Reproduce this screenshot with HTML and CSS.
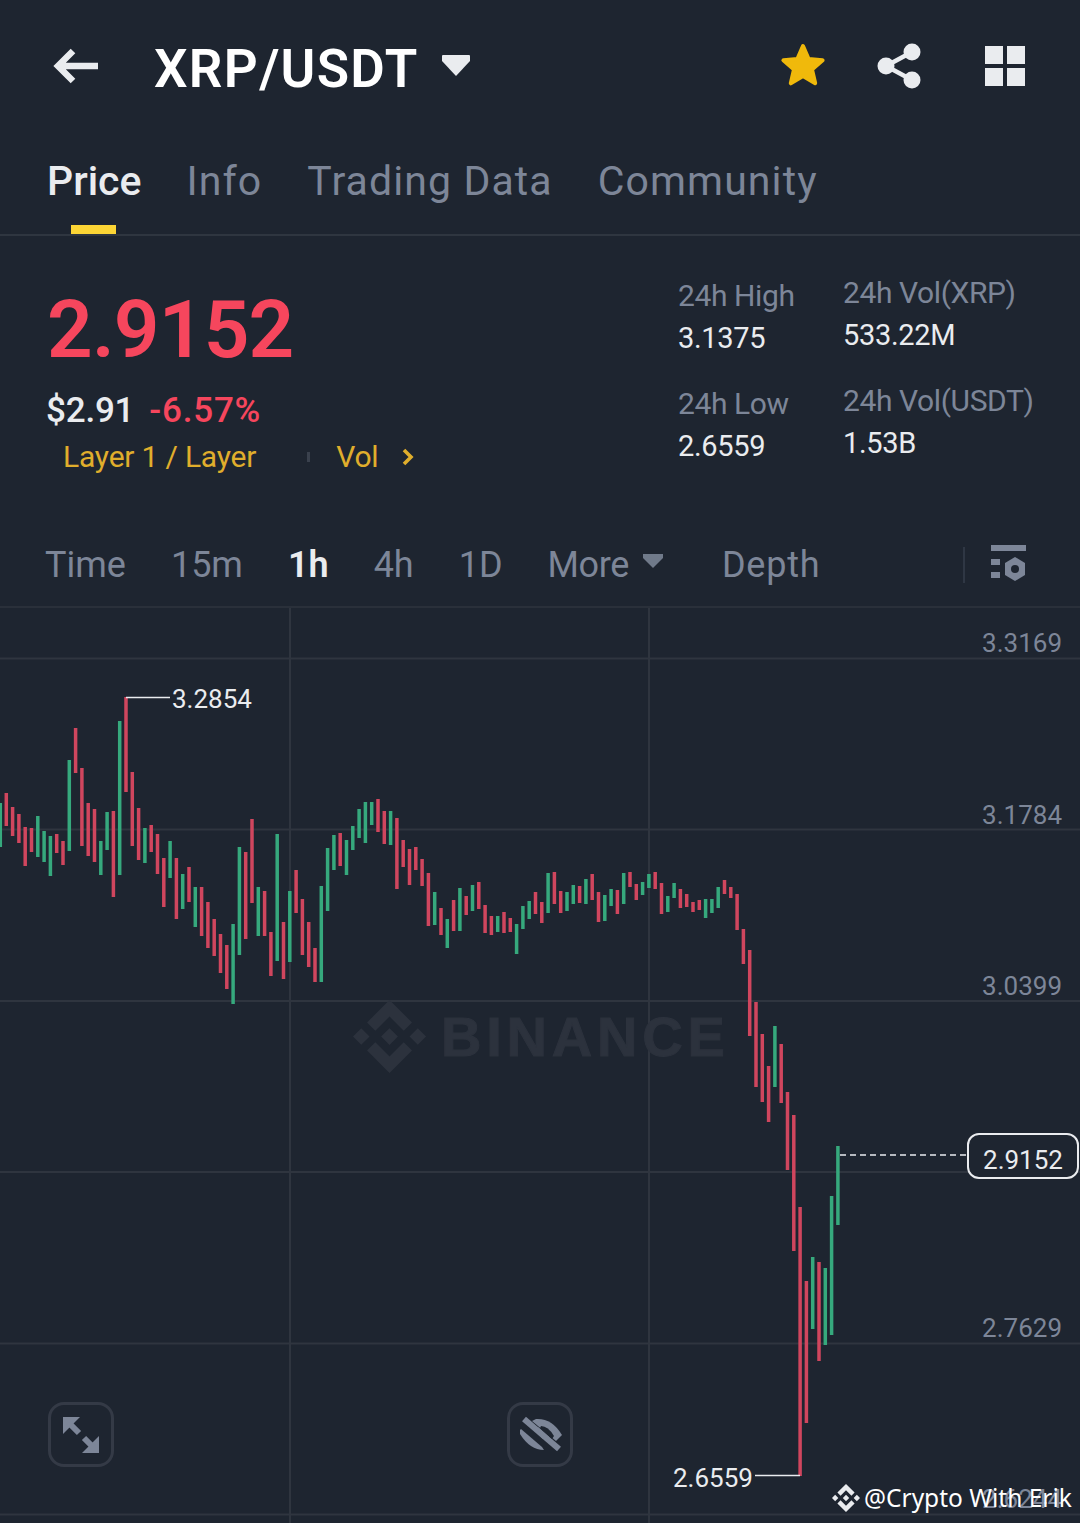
FILE: index.html
```html
<!DOCTYPE html>
<html lang="en">
<head>
  <meta charset="UTF-8" />
  <meta name="viewport" content="width=device-width, initial-scale=1.0"/>
  <title>XRP/USDT</title>
  <link rel="stylesheet" href="styles.css">
</head>
<body>

  <header class="topbar">
    <svg class="back-icon" width="46" height="38" viewBox="0 0 46 38">
      <path d="M46 19H6M21 4L6 19L21 34" fill="none" stroke="#eaecef" stroke-width="6.5"/>
    </svg>
    <h1 class="pair">XRP/USDT</h1>
    <svg class="pair-caret" width="28" height="21" viewBox="0 0 28 21">
      <path d="M1 0H27Q28 0 28 1V6L14 21L0 6V1Q0 0 1 0Z" fill="#eaecef"/>
    </svg>
    <div class="top-actions">
      <svg class="star-icon" width="48" height="48" viewBox="0 0 48 48">
        <path d="M24 4L29.6 17L43.6 18.3L33 27.5L36.2 41.3L24 34L11.8 41.3L15 27.5L4.4 18.3L18.4 17Z" fill="#f0b90b" stroke="#f0b90b" stroke-width="4" stroke-linejoin="round"/>
      </svg>
      <svg class="share-icon" width="44" height="46" viewBox="0 0 44 46">
        <path d="M35 9L9 23L35 37" fill="none" stroke="#eaecef" stroke-width="4.5"/>
        <circle cx="35" cy="9" r="8.5" fill="#eaecef"/>
        <circle cx="9" cy="23" r="8.5" fill="#eaecef"/>
        <circle cx="35" cy="37" r="8.5" fill="#eaecef"/>
      </svg>
      <svg width="40" height="40" viewBox="0 0 40 40">
        <path d="M0 0H18V18H0ZM22 0H40V18H22ZM0 22H18V40H0ZM22 22H40V40H22Z" fill="#eaecef"/>
      </svg>
    </div>
  </header>

  <nav class="tabs">
    <a class="tab active">Price</a>
    <a class="tab">Info</a>
    <a class="tab">Trading Data</a>
    <a class="tab">Community</a>
  </nav>

  <section class="summary">
    <div class="quote">
      <div class="last-price">2.9152</div>
      <div class="quote-sub">
        <span class="fiat">$2.91</span>
        <span class="change">-6.57%</span>
      </div>
      <div class="tags">
        <span>Layer 1 / Layer</span>
        <i class="tag-sep"></i>
        <span>Vol</span>
        <svg class="tag-arrow" width="12" height="18" viewBox="0 0 12 18">
          <path d="M2 2L9 9L2 16" fill="none" stroke="#e0ae2c" stroke-width="3.6"/>
        </svg>
      </div>
    </div>
    <div class="stats">
      <div class="stat-col">
        <div class="stat-label">24h High</div>
        <div class="stat-value">3.1375</div>
        <div class="stat-label gap">24h Low</div>
        <div class="stat-value">2.6559</div>
      </div>
      <div class="stat-col second">
        <div class="stat-label">24h Vol(XRP)</div>
        <div class="stat-value">533.22M</div>
        <div class="stat-label gap">24h Vol(USDT)</div>
        <div class="stat-value">1.53B</div>
      </div>
    </div>
  </section>

  <div class="intervals">
    <span>Time</span>
    <span>15m</span>
    <span class="current">1h</span>
    <span>4h</span>
    <span>1D</span>
    <span class="more">More
      <svg width="20" height="14" viewBox="0 0 20 14"><path d="M0 0H20V4L10 14L0 4Z" fill="#707a8a"/></svg>
    </span>
    <span class="depth">Depth</span>
    <i class="interval-sep"></i>
    <svg class="chart-settings" width="36" height="36" viewBox="0 0 36 36">
      <path d="M1 0H36V6H1ZM1 14H10V20H1ZM1 27H10V33H1Z" fill="#7d8698"/>
      <path d="M25 12L35 18V30L25 36L15 30V18Z" fill="#7d8698"/>
      <circle cx="25" cy="24" r="4" fill="#1e2530"/>
    </svg>
  </div>

  <main class="chart">
    <svg class="plot" width="1080" height="915" viewBox="0 608 1080 915">
      <path class="grid" d="M0 658.5H1080M0 829.5H1080M0 1001H1080M0 1172H1080M0 1343.5H1080M0 1514.5H1080M290 608V1523M649 608V1523"/>

      <!-- watermark -->
      <g class="mark" transform="translate(353 1000) scale(.577)">
        <path d="M38.73 53.2l24.59-24.58 24.6 24.6 14.3-14.31L63.32 0 24.41 38.9zM0 63.31l14.3-14.31 14.31 14.31-14.31 14.3zM38.73 73.41l24.59 24.59 24.6-24.6 14.31 14.29-38.9 38.91-38.91-38.88-.02-.02zM98 63.31l14.3-14.31 14.31 14.31-14.31 14.3zM77.83 63.3L63.32 48.78 52.59 59.51l-1.24 1.23-2.54 2.54 14.51 14.53 14.5-14.5z"/>
      </g>

      <path class="down" d="M6.3 793V826M12.6 807V836M18.9 814V843M25.2 827V866M31.5 828V852M56.7 834V853M63 841V865M75.6 728V773M81.9 768V846M88.2 803V856M94.5 809V862M113.4 811V897M126 697V792M132.3 772V846M138.6 808V860M151.2 825V852M157.5 834V874M163.8 858V907M176.4 858V919M189 867V902M201.6 887V936M207.9 902V948M214.2 919V956M220.5 934V973M226.8 945V989M245.7 852V939M252 819V903M264.6 891V936M270.9 932V976M283.5 922V979M296.1 870V913M302.4 899V955M308.7 922V967M315 948V982M340.2 833V866M378 799V832M384.3 811V844M396.9 818V889M403.2 840V867M409.5 849V885M415.8 847V870M422.1 859V886M428.4 873V926M441 908V935M453.6 900V931M466.2 896V915M478.8 882V909M485.1 905V933M491.4 916V935M504 912V933M510.3 918V932M535.5 892V914M541.8 902V923M554.4 872V904M560.7 891V913M579.6 886V903M592.2 874V900M598.5 892V922M617.4 890V914M630 872V887M636.3 884V900M655.2 872V889M661.5 883V914M680.4 889V908M686.7 894V907M693 902V912M699.3 900V910M724.5 880V894M730.8 887V898M737.1 894V930M743.4 929V964M749.7 950V1036M756 1002V1087M762.3 1034V1102M768.6 1066V1122M781.2 1044V1103M787.5 1092V1170M793.8 1115V1251M800.1 1207V1476M806.4 1281V1423M819 1262V1361"/>
      <path class="up" d="M0.3 803V847M37.8 816V857M44.1 831V862M50.4 836V876M69.3 760V851M100.8 841V875M107.1 812V850M119.7 721V875M144.9 828V863M170.1 841V878M182.7 874V909M195.3 887V927M233.1 924V1004M239.4 847V955M258.3 887V936M277.2 834V961M289.8 891V962M321.3 886V982M327.6 848V911M333.9 835V870M346.5 840V875M352.8 826V850M359.1 809V838M365.4 802V843M371.7 802V825M390.6 811V845M434.7 892V925M447.3 919V948M459.9 888V931M472.5 885V911M497.7 916V932M516.6 924V954M522.9 906V929M529.2 901V919M548.1 873V913M567 892V911M573.3 885V904M585.9 879V904M604.8 895V921M611.1 889V906M623.7 873V904M642.6 882V895M648.9 874V888M667.8 896V912M674.1 883V898M705.6 899V918M711.9 899V913M718.2 887V908M774.9 1026V1087M812.7 1257V1329M825.3 1268V1345M831.6 1196V1335M837.9 1146V1225"/>

      <path class="leader" d="M126 697.5H170M755 1475.5H800"/>
      <path class="last-line" d="M840 1155H967"/>
    </svg>

    <span class="wm-text">BINANCE</span>

    <span class="axis-label" style="top: 20px">3.3169</span>
    <span class="axis-label" style="top: 192px">3.1784</span>
    <span class="axis-label" style="top: 363px">3.0399</span>
    <span class="axis-label" style="top: 705px">2.7629</span>
    <span class="axis-label" style="top: 876px">2.6244</span>

    <span class="price-tag">2.9152</span>
    <span class="extreme high">3.2854</span>
    <span class="extreme low">2.6559</span>

    <button class="chart-btn expand">
      <svg width="36" height="36" viewBox="0 0 36 36">
        <path d="M0 0H17L0 17ZM36 36H19L36 19Z" fill="#7d8698"/>
        <path d="M6 6L16 16M21 21L30 30" fill="none" stroke="#7d8698" stroke-width="6"/>
      </svg>
    </button>
    <button class="chart-btn hide-all">
      <svg width="46" height="40" viewBox="0 0 46 40">
        <path d="M7 4L42 34" fill="none" stroke="#7d8698" stroke-width="6"/>
        <path d="M19 4Q35 3 45 20L39 26L15 6Z" fill="#7d8698"/>
        <path d="M24 11Q31 11 37 21L35 24L23 13Z" fill="#1e2530"/>
        <path d="M21 12L32 22L26 24Q21 20 21 12Z" fill="#7d8698"/>
        <path d="M3 15L4 14L25 32L27 35Q13 35 3 19Z" fill="#7d8698"/>
      </svg>
    </button>

    <div class="credit">
      <svg width="28" height="28" viewBox="0 0 126.61 126.61">
        <path d="M38.73 53.2l24.59-24.58 24.6 24.6 14.3-14.31L63.32 0 24.41 38.9zM0 63.31l14.3-14.31 14.31 14.31-14.31 14.3zM38.73 73.41l24.59 24.59 24.6-24.6 14.31 14.29-38.9 38.91-38.91-38.88-.02-.02zM98 63.31l14.3-14.31 14.31 14.31-14.31 14.3zM77.83 63.3L63.32 48.78 52.59 59.51l-1.24 1.23-2.54 2.54 14.51 14.53 14.5-14.5z" fill="#eaecef"/>
      </svg>
      <span>@Crypto With Erik</span>
    </div>
  </main>

</body>
</html>
```

FILE: styles.css
```css
* {
  box-sizing: border-box;
}

body {
  margin: 0;
  width: 1080px;
  height: 1523px;
  overflow: hidden;
  background: #1e2530;
  color: #eaecef;
  font-family: Roboto, "Noto Sans", sans-serif;
}

.topbar {
  display: flex;
  align-items: center;
  height: 132px;
  padding-left: 52px;
}

.pair {
  margin: 0 23px 0 56px;
  padding-top: 6px;
  font-size: 53px;
  font-weight: 600;
  line-height: 1;
  letter-spacing: 1.3px;
  color: #fff;
}

.pair-caret {
  margin-top: -2px;
}

.top-actions {
  display: flex;
  align-items: center;
  margin-left: auto;
  padding-right: 55px;
}

.star-icon {
  margin-right: 50px;
}

.share-icon {
  margin-right: 64px;
}

.tabs {
  display: flex;
  gap: 45px;
  height: 104px;
  padding-left: 47px;
  border-bottom: 2px solid #2f3640;
}

.tab {
  position: relative;
  padding-top: 24px;
  font-size: 41px;
  line-height: 50px;
  letter-spacing: 1.1px;
  color: #7d8698;
}

.tab.active {
  color: #eaecef;
  font-weight: 500;
  letter-spacing: 0;
}

.tab.active::after {
  content: "";
  position: absolute;
  left: 24px;
  bottom: 0;
  width: 45px;
  height: 9px;
  background: #fcd535;
}

.summary {
  display: flex;
  height: 285px;
}

.quote {
  padding-left: 47px;
}

.last-price {
  margin-top: 54px;
  font-size: 80px;
  font-weight: 600;
  line-height: 80px;
  letter-spacing: -.8px;
  color: #f6465d;
}

.quote-sub {
  display: flex;
  gap: 15px;
  margin: 20px 0 0 -1px;
  font-size: 35px;
  font-weight: 500;
  line-height: 42px;
}

.fiat {
  letter-spacing: -.2px;
}

.change {
  letter-spacing: .8px;
  color: #f6465d;
}

.tags {
  display: flex;
  align-items: center;
  margin-top: 5px;
  padding-left: 16px;
  font-size: 30px;
  line-height: 40px;
  letter-spacing: -.2px;
  color: #e0ae2c;
}

.tag-sep {
  width: 3px;
  height: 10px;
  margin: 0 26px 0 51px;
  background: #3a414d;
}

.tag-arrow {
  margin-left: 24px;
}

.stats {
  display: flex;
  width: 402px;
  margin-left: auto;
}

.stat-col {
  width: 165px;
  padding-top: 39px;
}

.stat-col.second {
  width: auto;
  padding-top: 36px;
  white-space: nowrap;
}

.stat-label {
  font-size: 30px;
  line-height: 42px;
  letter-spacing: -.4px;
  color: #7d8698;
}

.stat-label.gap {
  margin-top: 24px;
}

.stat-value {
  font-size: 29px;
  line-height: 42px;
  letter-spacing: -.3px;
  color: #eaecef;
}

.intervals {
  display: flex;
  align-items: center;
  gap: 45px;
  height: 87px;
  padding: 2px 54px 0 45px;
  border-bottom: 2px solid #2a303a;
  font-size: 36px;
  color: #7d8698;
}

.intervals .current {
  font-weight: 600;
  color: #eaecef;
}

.more {
  display: flex;
  align-items: center;
  gap: 14px;
  letter-spacing: -.4px;
}

.more svg {
  margin-top: -8px;
}

.depth {
  margin-left: 14px;
  letter-spacing: .8px;
}

.interval-sep {
  width: 2px;
  height: 36px;
  margin-left: auto;
  margin-right: -20px;
  background: #2f3744;
}

.chart-settings {
  margin-top: -4px;
}

.chart {
  position: relative;
  height: 915px;
  overflow: hidden;
}

.plot {
  position: absolute;
  left: 0;
  top: 0;
}

.grid {
  fill: none;
  stroke: #2f353f;
  stroke-width: 2;
}

.mark {
  fill: #2c323d;
}

.down,
.up {
  fill: none;
  stroke-width: 3.5;
}

.down {
  stroke: #d0465e;
}

.up {
  stroke: #36a97d;
}

.leader {
  fill: none;
  stroke: #eaecef;
  stroke-width: 1.5;
}

.last-line {
  fill: none;
  stroke: #eaecef;
  stroke-width: 1.5;
  stroke-dasharray: 6 4;
}

.wm-text {
  position: absolute;
  left: 441px;
  top: 396px;
  font-family: "Liberation Sans", sans-serif;
  font-size: 56px;
  font-weight: 700;
  line-height: 66px;
  letter-spacing: 4.8px;
  -webkit-text-stroke: 1px #2c323d;
  color: #2c323d;
}

.axis-label {
  position: absolute;
  right: 18px;
  font-size: 26px;
  line-height: 30px;
  color: #7d8698;
}

.price-tag {
  position: absolute;
  left: 967px;
  top: 525px;
  width: 112px;
  height: 46px;
  padding-top: 2px;
  border: 2px solid #eaecef;
  border-radius: 12px;
  background: #1e2530;
  font-size: 26px;
  line-height: 46px;
  text-align: center;
  color: #eaecef;
}

.extreme {
  position: absolute;
  font-size: 26px;
  line-height: 30px;
  color: #eaecef;
}

.extreme.high {
  left: 172px;
  top: 76px;
}

.extreme.low {
  left: 673px;
  top: 855px;
}

.chart-btn {
  position: absolute;
  display: flex;
  align-items: center;
  justify-content: center;
  top: 794px;
  width: 66px;
  height: 65px;
  padding: 0;
  border: 3px solid #343a46;
  border-radius: 16px;
  background: transparent;
}

.chart-btn.expand {
  left: 48px;
}

.chart-btn.hide-all {
  left: 507px;
}

.credit {
  position: absolute;
  left: 832px;
  top: 875px;
  display: flex;
  align-items: center;
  gap: 4px;
  font-family: "Noto Sans", sans-serif;
  font-size: 24.5px;
  line-height: 30px;
  color: #fff;
  white-space: nowrap;
}
```
